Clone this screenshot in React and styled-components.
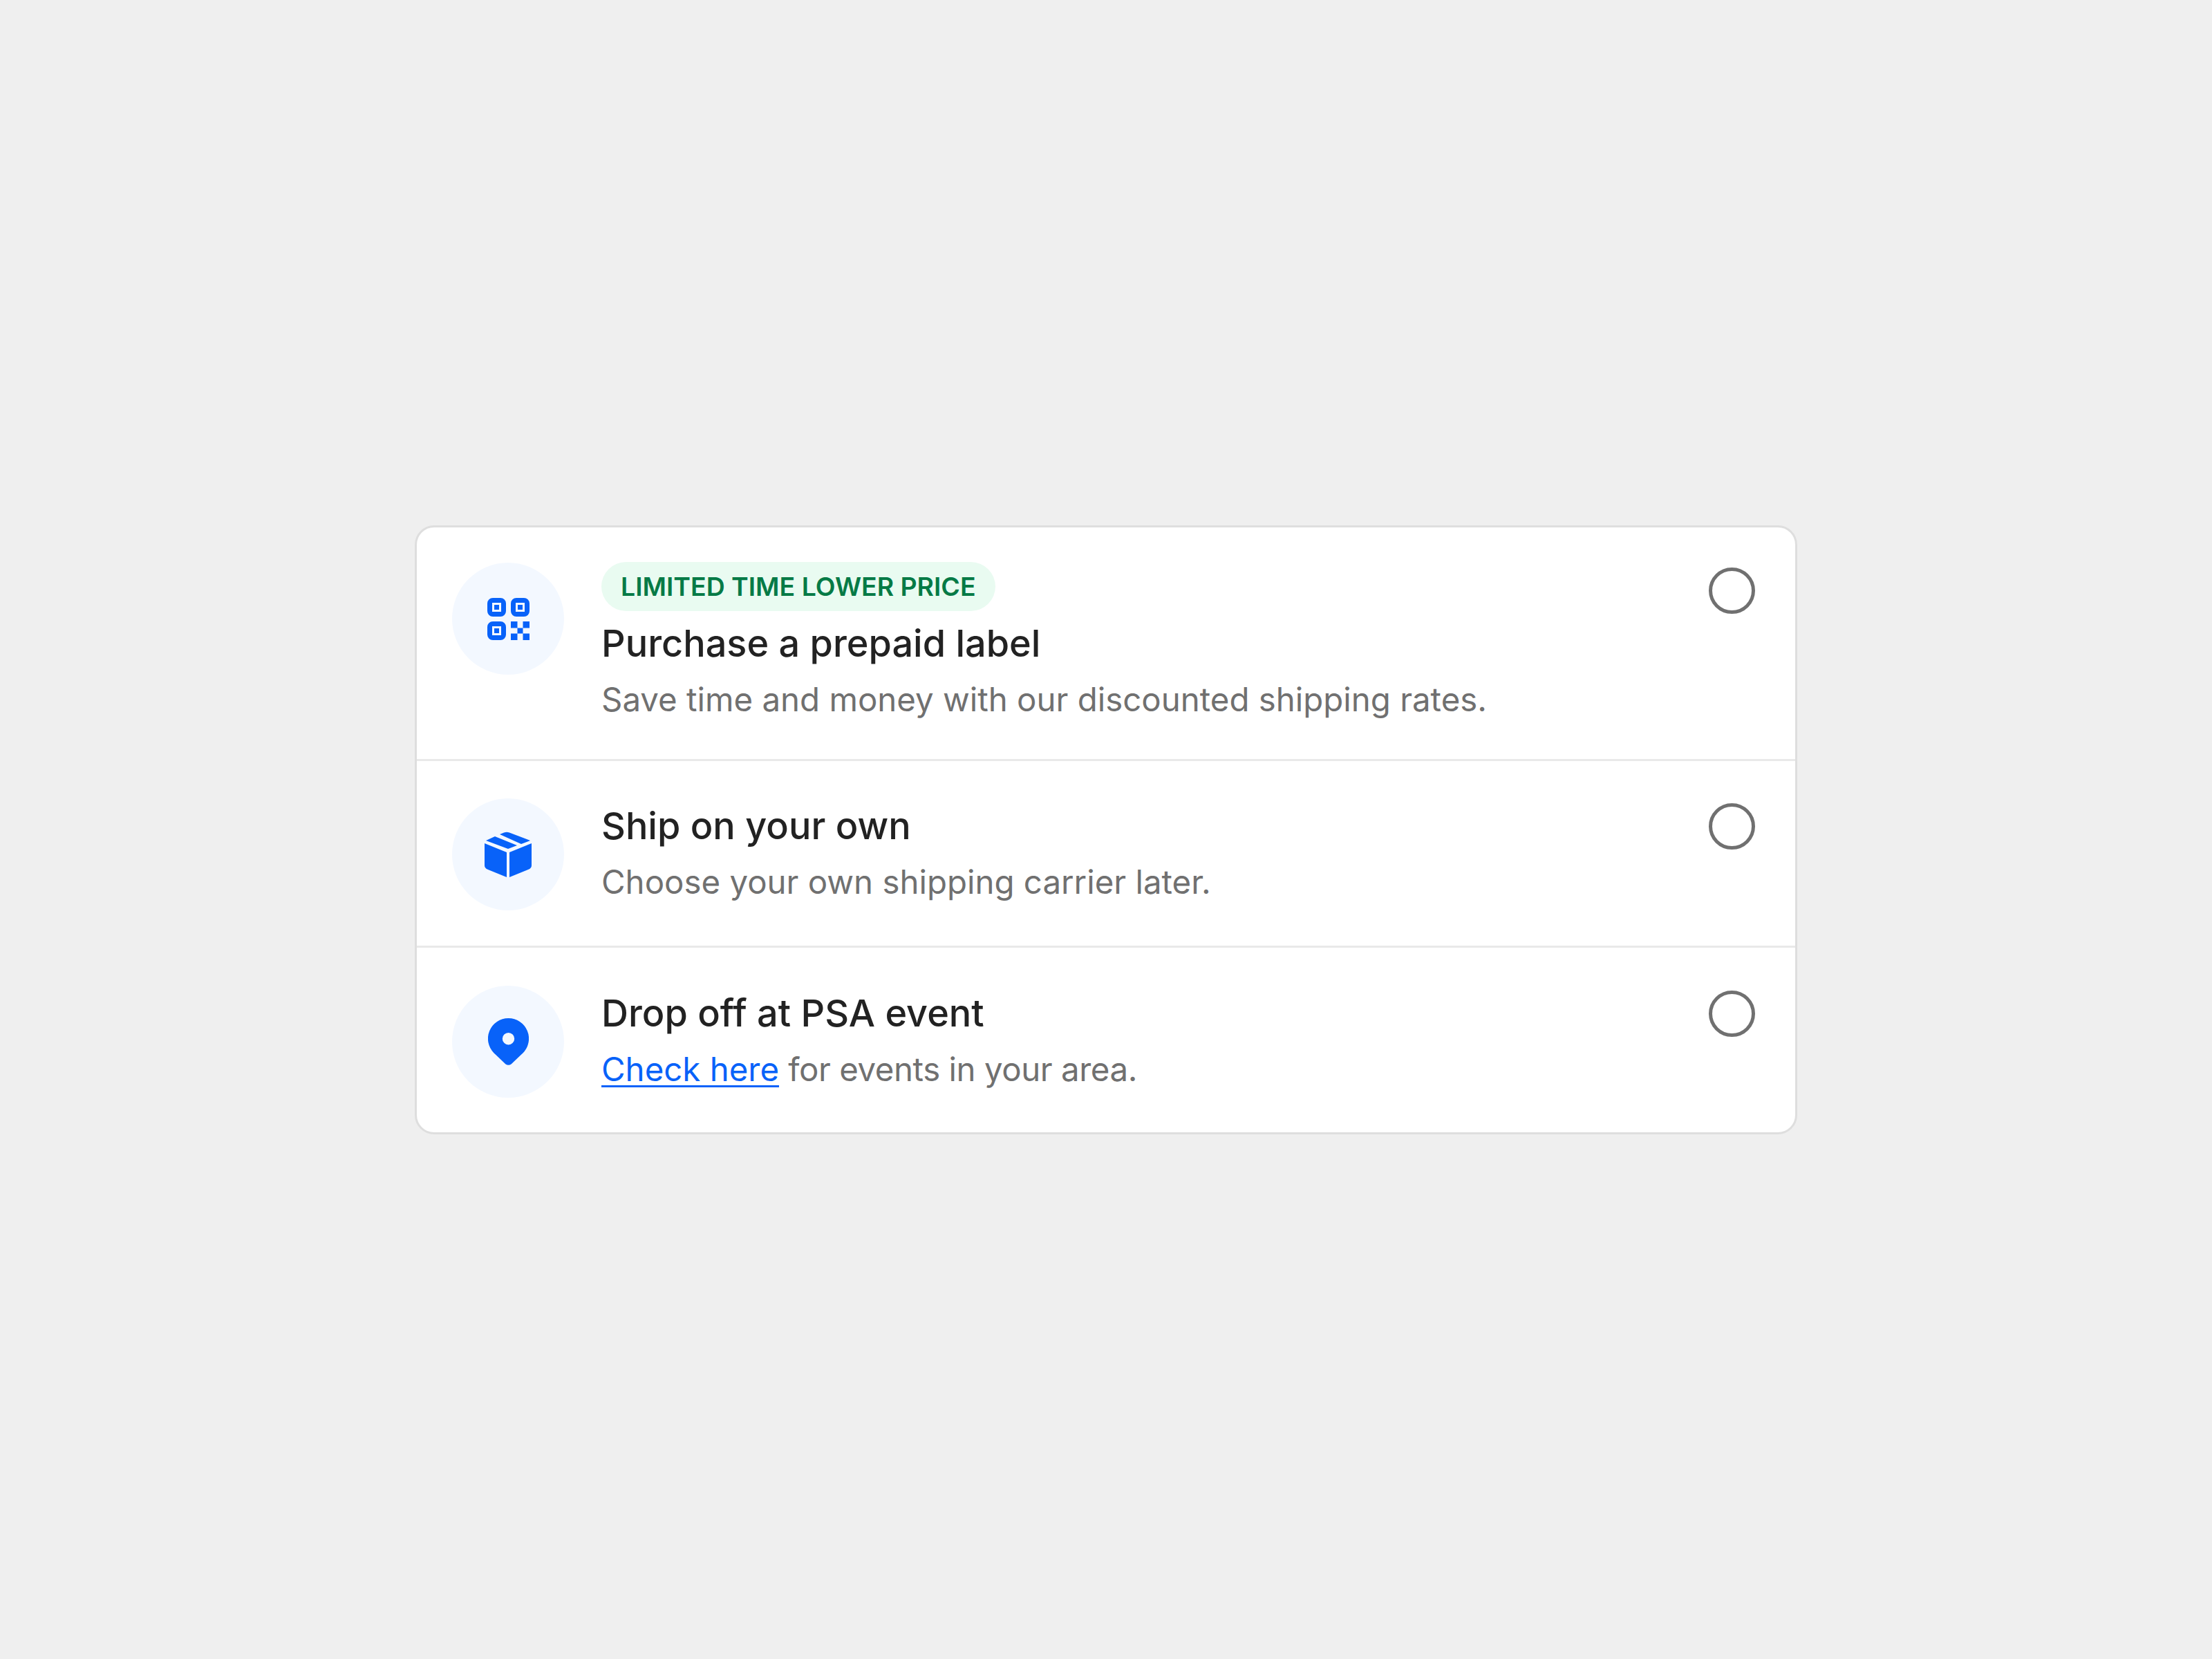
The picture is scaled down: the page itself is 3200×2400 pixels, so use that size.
import React from "react";
import styled, { createGlobalStyle } from "styled-components";

const GlobalStyle = createGlobalStyle`
  html, body {
    margin: 0;
    background: #efefef;
  }
`;

function QrIcon() {
  const finder = (x, y) => (
    <path
      fillRule="evenodd"
      d={`M${x + 8} ${y}h11a8 8 0 0 1 8 8v11a8 8 0 0 1-8 8h-11a8 8 0 0 1-8-8v-11a8 8 0 0 1 8-8zM${x + 7} ${y + 7}v13h13v-13zM${x + 10} ${y + 10}h7v7h-7z`}
    />
  );
  return (
    <svg width="61" height="61" viewBox="0 0 61 61" fill="#0862f9">
      {finder(0, 0)}
      {finder(34, 0)}
      {finder(0, 34)}
      <path d="M34 34h9.500v9.500h-9.500zM51.500 34h9.500v9.500h-9.500zM43.500 43.500h8v8h-8zM34 51.500h9.500v9.500h-9.500zM51.500 51.500h9.500v9.500h-9.500z" />
    </svg>
  );
}

function BoxIcon() {
  return (
    <svg width="68" height="67" viewBox="0 0 68 67" fill="#0862f9">
      <path d="M0 17L32 30V66L5 55Q0 53 0 49Z" />
      <path d="M36 30L68 17V49Q68 53 63 55L36 66Z" />
      <path d="M2 13L15 7L47 20L34 25Z" />
      <path d="M22 4L28 1.500Q32 0 36 1.500L66 13L53 18Z" />
    </svg>
  );
}

function PinIcon() {
  return (
    <svg width="59" height="68" viewBox="0 0 59 68" fill="#0862f9">
      <path
        fillRule="evenodd"
        d="M29.500 0A29.500 29.500 0 0 1 50.400 50.400L33.500 66.500Q29.500 69 25.500 66.500L8.600 50.400A29.500 29.500 0 0 1 29.500 0ZM29.500 21A8.700 8.700 0 1 0 29.500 38.400A8.700 8.700 0 1 0 29.500 21Z"
      />
    </svg>
  );
}

export default function App() {
  return (
    <Page>
      <GlobalStyle />
      <Card>
        <Option $top={51} $bottom={45}>
          <IconCircle>
            <QrIcon />
          </IconCircle>
          <Body>
            <Tag>LIMITED TIME LOWER PRICE</Tag>
            <Title>Purchase a prepaid label</Title>
            <Description>Save time and money with our discounted shipping rates.</Description>
          </Body>
          <Radio />
        </Option>
        <Option $top={54} $bottom={51}>
          <IconCircle>
            <BoxIcon />
          </IconCircle>
          <Body>
            <Title>Ship on your own</Title>
            <Description>Choose your own shipping carrier later.</Description>
          </Body>
          <Radio />
        </Option>
        <Option $top={55} $bottom={50}>
          <IconCircle>
            <PinIcon />
          </IconCircle>
          <Body>
            <Title>Drop off at PSA event</Title>
            <Description>
              <CheckLink href="#">Check here</CheckLink> <Trailing>for events in your area.</Trailing>
            </Description>
          </Body>
          <Radio />
        </Option>
      </Card>
    </Page>
  );
}

const Page = styled.div`
  width: 3200px;
  height: 2400px;
  padding-top: 760px;
  padding-left: 600px;
  box-sizing: border-box;
  background: #efefef;
  font-family: Inter, "Liberation Sans", sans-serif;
`;

const Card = styled.div`
  width: 2000px;
  box-sizing: border-box;
  background: #fff;
  border: 3px solid #dedede;
  border-radius: 28px;
`;

const Option = styled.div`
  display: flex;
  align-items: flex-start;
  padding: ${(props) => props.$top}px 58px ${(props) => props.$bottom}px 51px;
  border-bottom: 3px solid #e9e9e9;

  &:last-child {
    border-bottom: none;
  }
`;

const IconCircle = styled.div`
  flex: none;
  width: 162px;
  height: 162px;
  margin-right: 54px;
  border-radius: 50%;
  background: #f3f8ff;
  display: flex;
  align-items: center;
  justify-content: center;
`;

const Body = styled.div`
  flex: 1;
  min-width: 0;
`;

const Tag = styled.div`
  display: block;
  width: fit-content;
  height: 71px;
  line-height: 71px;
  margin: -1px 0 7px;
  padding: 0 28px;
  border-radius: 36px;
  background: #e9fbf1;
  color: #067a46;
  font-size: 37.400px;
  font-weight: 600;
`;

const Title = styled.div`
  color: #222;
  font-size: 54px;
  font-weight: 500;
  line-height: 80px;
`;

const Description = styled.div`
  color: #707070;
  font-size: 47.400px;
  line-height: 82px;
`;

const CheckLink = styled.a`
  color: #0862f9;
  text-decoration: underline;
  text-decoration-thickness: 3px;
  text-underline-offset: 6px;
`;

const Trailing = styled.span`
  letter-spacing: -0.450px;
`;

const Radio = styled.div`
  flex: none;
  width: 67px;
  height: 67px;
  margin-top: 7px;
  box-sizing: border-box;
  border: 5px solid #707070;
  border-radius: 50%;
`;
